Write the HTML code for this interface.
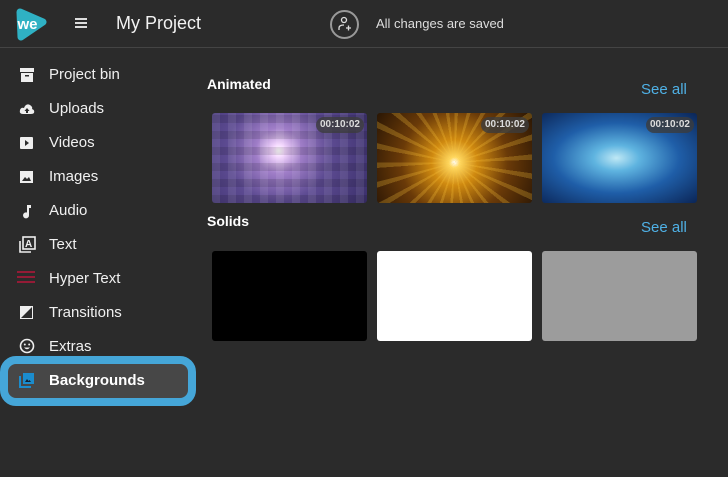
<!DOCTYPE html>
<html><head><meta charset="utf-8"><style>
*{margin:0;padding:0;box-sizing:border-box}
body{width:728px;height:477px;background:#2b2b2b;font-family:"Liberation Sans",sans-serif;color:#f2f2f2;position:relative;overflow:hidden}
.hdr{position:absolute;left:0;top:0;width:728px;height:48px;border-bottom:1px solid #444}
.abs{position:absolute}
.nav{position:absolute;left:49px;font-size:15px;color:#f0f0f0}
.ic{position:absolute;left:19px}
.thumb{position:absolute;width:155px;height:90px;border-radius:3px;overflow:hidden}
.time{position:absolute;right:3px;top:4px;background:rgba(60,60,60,.8);color:#ddd;font-size:10px;font-weight:bold;padding:2px 4px 3px;border-radius:8px}
.see{position:absolute;left:641px;color:#4fb1e6;font-size:15px}
h3{position:absolute;left:207px;font-size:14px;font-weight:bold;color:#fff}
</style></head><body>
<div class="hdr"></div>
<svg class="abs" style="left:14px;top:7px" width="34" height="34" viewBox="0 0 34 34"><path d="M6 5 L29 15 L7 30 Z" fill="#2fb1c4" stroke="#2fb1c4" stroke-width="7" stroke-linejoin="round"/><text x="3.5" y="22" font-family="Liberation Sans" font-weight="bold" font-size="15" fill="#fff">we</text></svg>
<div class="abs" style="left:75px;top:18px;width:12px;height:2px;background:#ddd;box-shadow:0 4px 0 #ddd,0 8px 0 #ddd"></div>
<div class="abs" style="left:116px;top:13px;font-size:18px;color:#f2f2f2">My Project</div>
<div class="abs" style="left:330px;top:10px;width:29px;height:29px;border:2px solid #999;border-radius:50%"></div>
<svg class="abs" style="left:337px;top:16px" width="16" height="16" viewBox="0 0 16 16" fill="none" stroke="#ddd" stroke-width="1.3"><circle cx="7" cy="4" r="2.5"/><path d="M2 14 V12 Q2 9 7 9"/><path d="M9 12 H14 M11.5 9.5 V14.5"/></svg>
<div class="abs" style="left:376px;top:16px;font-size:13px;color:#ddd">All changes are saved</div>

<svg class="ic" style="top:67px" width="16" height="16"><rect x="1" y="1" width="14" height="4" fill="#eee"/><rect x="2" y="6" width="12" height="9" fill="#eee"/><rect x="6" y="8" width="4" height="1.5" fill="#2b2b2b"/></svg>
<div class="nav" style="top:66px">Project bin</div>
<svg class="ic" style="top:102px" width="16" height="14"><path d="M4 12 Q0 12 1 8 Q2 5 5 6 Q7 1 11 3 Q14 5 13 7 Q16 8 15 11 Q14 12 12 12Z" fill="#eee"/><path d="M8 6 L5.5 9 H7 V11 H9 V9 H10.5Z" fill="#2b2b2b"/></svg>
<div class="nav" style="top:100px">Uploads</div>
<svg class="ic" style="top:135px" width="16" height="16"><rect x="1" y="2" width="13" height="12" rx="1" fill="#eee"/><path d="M6 5 L10 8 L6 11Z" fill="#2b2b2b"/></svg>
<div class="nav" style="top:134px">Videos</div>
<svg class="ic" style="top:169px" width="16" height="16"><rect x="1" y="2" width="13" height="12" fill="#eee"/><path d="M3 12 L6 8 L8 10 L10 8 L12 12Z" fill="#2b2b2b"/></svg>
<div class="nav" style="top:168px">Images</div>
<svg class="ic" style="top:203px" width="16" height="16"><path d="M8 2 H12 V5 H10 V12 A3 3 0 1 1 8 9.5Z" fill="#eee"/></svg>
<div class="nav" style="top:202px">Audio</div>
<svg class="ic" style="top:236px" width="18" height="18"><rect x="4" y="1" width="12" height="12" fill="none" stroke="#eee" stroke-width="1.6"/><path d="M1 5 V16 H12" fill="none" stroke="#eee" stroke-width="1.6"/><text x="6" y="11" font-size="10" font-weight="bold" fill="#eee" font-family="Liberation Sans">A</text></svg>
<div class="nav" style="top:236px">Text</div>
<svg class="ic" style="top:271px;left:17px" width="20" height="14"><path d="M0 1H18M0 6H18M0 11H18" stroke="#b8163a" stroke-width="1.5"/></svg>
<div class="nav" style="top:270px">Hyper Text</div>
<svg class="ic" style="top:305px" width="16" height="16"><rect x="1" y="1" width="13" height="13" fill="#eee"/><path d="M13 2 V13 H2Z" fill="#2b2b2b"/></svg>
<div class="nav" style="top:304px">Transitions</div>
<svg class="ic" style="top:338px" width="16" height="16"><circle cx="8" cy="8" r="6.5" fill="none" stroke="#eee" stroke-width="1.6"/><circle cx="5.8" cy="6.5" r="1" fill="#eee"/><circle cx="10.2" cy="6.5" r="1" fill="#eee"/><path d="M5 9.5 Q8 13 11 9.5Z" fill="#eee"/></svg>
<div class="nav" style="top:338px">Extras</div>

<div class="abs" style="left:0;top:356px;width:196px;height:50px;border:8px solid #45a6d8;border-radius:16px;background:#474747"></div>
<svg class="ic" style="top:372px" width="16" height="16"><rect x="4" y="1" width="11" height="11" fill="#1b8ccc"/><path d="M1 4 V15 H12" fill="none" stroke="#1b8ccc" stroke-width="2"/><path d="M6 10 L8 7 L9.5 9 L10.5 8 L12 10Z" fill="#123"/></svg>
<div class="nav" style="top:372px;font-weight:bold;color:#fff">Backgrounds</div>

<h3 style="top:76px">Animated</h3>
<div class="see" style="top:81px">See all</div>
<div class="thumb" style="left:212px;top:113px;background:repeating-linear-gradient(90deg,rgba(255,255,255,.08) 0 8px,transparent 8px 16px),repeating-linear-gradient(0deg,rgba(0,0,0,.12) 0 8px,transparent 8px 16px),radial-gradient(circle at 43% 42%,#fff 0,#f5d8ff 6%,#a07ec8 22%,#5d4b92 50%,#3a2f6a 100%)"><div class="time">00:10:02</div></div>
<div class="thumb" style="left:377px;top:113px;background:repeating-conic-gradient(from 0deg at 50% 55%,rgba(255,200,60,.25) 0 4deg,transparent 4deg 14deg),radial-gradient(circle at 50% 55%,#fff 0,#ffd860 6%,#d08a10 25%,#6a3a08 58%,#2a1604 100%)"><div class="time">00:10:02</div></div>
<div class="thumb" style="left:542px;top:113px;background:radial-gradient(ellipse at 48% 50%,#bfe8f5 0,#5fb4e0 20%,#1f5ea8 55%,#0b2556 100%)"><div class="time">00:10:02</div></div>

<h3 style="top:213px">Solids</h3>
<div class="see" style="top:219px">See all</div>
<div class="thumb" style="left:212px;top:251px;background:#000"></div>
<div class="thumb" style="left:377px;top:251px;background:#fff"></div>
<div class="thumb" style="left:542px;top:251px;background:#9c9c9c"></div>
</body></html>
